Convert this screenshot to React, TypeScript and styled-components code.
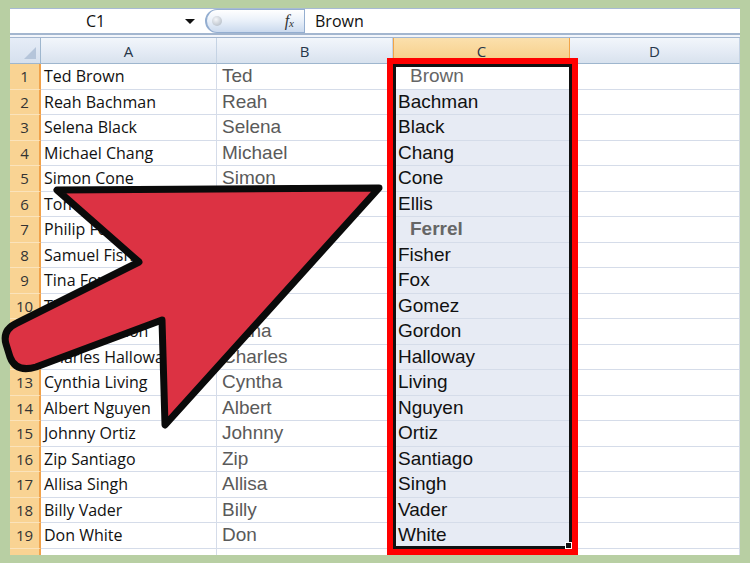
import React from 'react'
import styled, { createGlobalStyle, css } from 'styled-components'

const GlobalStyle = createGlobalStyle`
  html, body {
    margin: 0;
    padding: 0;
    background: #b8cfa3;
  }
`

type Row = { full: string; first: string; last: string }

const rows: Row[] = [
  { full: 'Ted Brown', first: 'Ted', last: 'Brown' },
  { full: 'Reah Bachman', first: 'Reah', last: 'Bachman' },
  { full: 'Selena Black', first: 'Selena', last: 'Black' },
  { full: 'Michael Chang', first: 'Michael', last: 'Chang' },
  { full: 'Simon Cone', first: 'Simon', last: 'Cone' },
  { full: 'Tom Ellis', first: 'Tom', last: 'Ellis' },
  { full: 'Philip Ferrel', first: 'Philip', last: 'Ferrel' },
  { full: 'Samuel Fisher', first: 'Samuel', last: 'Fisher' },
  { full: 'Tina Fox', first: 'Tina', last: 'Fox' },
  { full: 'Tim Gomez', first: 'Tim', last: 'Gomez' },
  { full: 'Diana Gordon', first: 'Diana', last: 'Gordon' },
  { full: 'Charles Halloway', first: 'Charles', last: 'Halloway' },
  { full: 'Cynthia Living', first: 'Cyntha', last: 'Living' },
  { full: 'Albert Nguyen', first: 'Albert', last: 'Nguyen' },
  { full: 'Johnny Ortiz', first: 'Johnny', last: 'Ortiz' },
  { full: 'Zip Santiago', first: 'Zip', last: 'Santiago' },
  { full: 'Allisa Singh', first: 'Allisa', last: 'Singh' },
  { full: 'Billy Vader', first: 'Billy', last: 'Vader' },
  { full: 'Don White', first: 'Don', last: 'White' },
]

const columns = ['A', 'B', 'C', 'D']

export default function App() {
  return (
    <>
      <GlobalStyle />
      <Page>
        <Sheet>
          <FormulaBar>
            <NameBox>
              <NameText>C1</NameText>
              <DropArrow />
            </NameBox>
            <FxButton>
              <Knob />
              <Fx>
                f<sub>x</sub>
              </Fx>
            </FxButton>
            <FormulaInput>Brown</FormulaInput>
          </FormulaBar>
          <Divider />
          <Grid>
            <Corner>
              <CornerTriangle />
            </Corner>
            {columns.map((c) => (
              <ColHeader key={c} $selected={c === 'C'}>
                {c}
              </ColHeader>
            ))}
            {rows.map((r, i) => (
              <React.Fragment key={i}>
                <RowHeader>{i + 1}</RowHeader>
                <NameCell>{r.full}</NameCell>
                <FirstCell>{r.first}</FirstCell>
                <LastCell
                  $active={i === 0}
                  $indent={i === 0 || i === 6}
                  $bold={i === 6}
                >
                  {r.last}
                </LastCell>
                <EmptyCell />
              </React.Fragment>
            ))}
            <RowHeader />
            <NameCell />
            <FirstCell />
            <LastCell $active={false} $indent={false} $bold={false} />
            <EmptyCell />
          </Grid>
        </Sheet>
        <Highlight>
          <FillHandle />
        </Highlight>
        <ArrowSvg viewBox="0 0 750 563" width="750" height="563">
          <path
            d="M57,190 L379,188 L165,425 L162,320 L36,367 Q16,373 10,357 L6,344 Q2,330 17,323 L139,262 Z"
            fill="#dc3243"
            stroke="#0a0a0a"
            strokeWidth="7"
            strokeLinejoin="round"
          />
        </ArrowSvg>
      </Page>
    </>
  )
}

const Page = styled.div`
  position: relative;
  width: 750px;
  height: 563px;
  overflow: hidden;
  padding: 8px 0 0 10px;
  box-sizing: border-box;
`

const Sheet = styled.div`
  width: 730px;
  height: 547px;
  background: #fff;
  overflow: hidden;
  display: flex;
  flex-direction: column;
`

const FormulaBar = styled.div`
  height: 25px;
  flex: none;
  display: flex;
  align-items: stretch;
  border-top: 1px solid #a7bad3;
  box-sizing: border-box;
  background: #fff;
`

const NameBox = styled.div`
  width: 195px;
  display: flex;
  align-items: center;
`

const NameText = styled.span`
  flex: 1;
  text-align: center;
  font-family: 'Open Sans', 'Liberation Sans', sans-serif;
  font-size: 16px;
  color: #111;
  padding-right: 4px;
`

const DropArrow = styled.span`
  width: 0;
  height: 0;
  border-left: 5px solid transparent;
  border-right: 5px solid transparent;
  border-top: 5px solid #111;
  margin-right: 10px;
`

const FxButton = styled.div`
  width: 100px;
  display: flex;
  align-items: center;
  justify-content: space-between;
  border: 1px solid #94aed0;
  border-left-width: 2px;
  border-radius: 14px 0 0 14px;
  background: linear-gradient(#ffffff 0%, #e9f0f9 50%, #cbdaee 100%);
  box-sizing: border-box;
  padding: 0 10px 0 5px;
`

const Knob = styled.span`
  width: 10px;
  height: 10px;
  border-radius: 50%;
  background: radial-gradient(circle at 40% 35%, #f4f6f9, #aab3be);
`

const Fx = styled.span`
  font-family: 'Liberation Serif', serif;
  font-style: italic;
  font-size: 16px;
  color: #333;

  sub {
    font-size: 11px;
    vertical-align: -1px;
  }
`

const FormulaInput = styled.div`
  flex: 1;
  display: flex;
  align-items: center;
  padding-left: 10px;
  font-family: 'Open Sans', 'Liberation Sans', sans-serif;
  font-size: 16px;
  color: #111;
`

const Divider = styled.div`
  height: 5px;
  flex: none;
  box-sizing: border-box;
  border-top: 2px solid #a3b6cf;
  border-bottom: 1px solid #a3b6cf;
  background: #f2f5fa;
`

const Grid = styled.div`
  display: grid;
  grid-template-columns: 31px 176px 176px 177px 170px;
  grid-template-rows: 26px;
  grid-auto-rows: 25.5px;
`

const headerBase = css`
  box-sizing: border-box;
  display: flex;
  align-items: center;
  justify-content: center;
  font-family: 'Open Sans', 'Liberation Sans', sans-serif;
  font-size: 15px;
  color: #27364a;
`

const Corner = styled.div`
  ${headerBase};
  position: relative;
  background: linear-gradient(#e6edf7, #d6e0ee);
  border-right: 1px solid #9eb6ce;
  border-bottom: 1px solid #9eb6ce;
`

const CornerTriangle = styled.span`
  position: absolute;
  right: 4px;
  bottom: 4px;
  width: 0;
  height: 0;
  border-left: 12px solid transparent;
  border-bottom: 12px solid #b5c5da;
`

const ColHeader = styled.div<{ $selected: boolean }>`
  ${headerBase};
  border-right: 1px solid ${({ $selected }) => ($selected ? '#f2a447' : '#c5d3e4')};
  border-bottom: 1px solid #9eb6ce;
  background: ${({ $selected }) =>
    $selected
      ? 'linear-gradient(#fbe0ad, #f6cd85)'
      : 'linear-gradient(#f2f6fb 0%, #e3eaf4 60%, #d8e2ee 100%)'};
  ${({ $selected }) => $selected && 'border-left: 1px solid #f2a447;'}
`

const RowHeader = styled.div`
  ${headerBase};
  font-size: 15px;
  color: #333;
  background: #f9d393;
  border-right: 2px solid #f1a24a;
  border-bottom: 1px solid #fbe3bb;
`

const cellBase = css`
  box-sizing: border-box;
  border-right: 1px solid #d5dce9;
  border-bottom: 1px solid #d5dce9;
  display: flex;
  align-items: center;
  white-space: nowrap;
  overflow: hidden;
`

const NameCell = styled.div`
  ${cellBase};
  padding-left: 3px;
  font-family: 'Open Sans', 'Liberation Sans', sans-serif;
  font-size: 16px;
  color: #111;
`

const FirstCell = styled.div`
  ${cellBase};
  padding-left: 5px;
  font-family: 'Liberation Sans', Arial, sans-serif;
  font-size: 19px;
  color: #5a5a5a;
`

const LastCell = styled.div<{ $active: boolean; $indent: boolean; $bold: boolean }>`
  ${cellBase};
  padding-left: ${({ $indent }) => ($indent ? '17px' : '5px')};
  background: ${({ $active }) => ($active ? '#ffffff' : '#e7ebf4')};
  font-family: 'Liberation Sans', Arial, sans-serif;
  font-size: 19px;
  font-weight: ${({ $bold }) => ($bold ? 700 : 400)};
  color: ${({ $indent }) => ($indent ? '#666' : '#111')};
`

const EmptyCell = styled.div`
  ${cellBase};
`

const Highlight = styled.div`
  position: absolute;
  left: 387px;
  top: 58px;
  width: 191px;
  height: 497px;
  box-sizing: border-box;
  border: 6px solid #ff0000;
  box-shadow: inset 0 0 0 3px #111;
  pointer-events: none;
`

const FillHandle = styled.span`
  position: absolute;
  right: 0;
  bottom: 0;
  width: 5px;
  height: 5px;
  background: #111;
  border: 1px solid #fff;
`

const ArrowSvg = styled.svg`
  position: absolute;
  left: 0;
  top: 0;
  pointer-events: none;
`
